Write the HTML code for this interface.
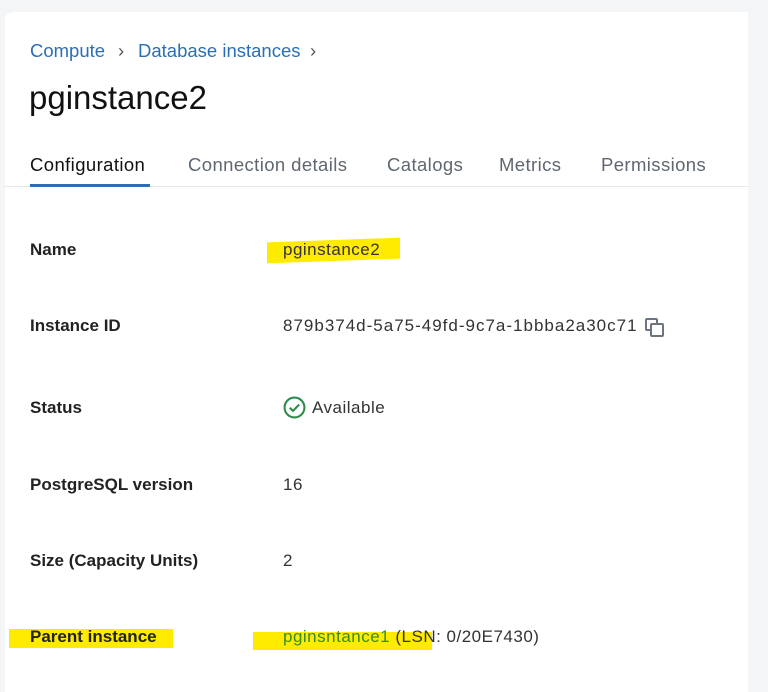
<!DOCTYPE html>
<html><head><style>
body{margin:0;width:768px;height:675px;background:#f4f5f7;font-family:"Liberation Sans",sans-serif;position:relative;overflow:hidden}
.card{position:absolute;left:5px;top:12px;width:743px;height:680px;background:#fff;border-radius:8px 0 0 0}
.a{position:absolute;white-space:nowrap}
.bc{font-size:18.5px;color:#2a6fb5;top:40px}
.tab{font-size:18.5px;letter-spacing:0.4px;color:#5f6770;top:154px}
.lab{left:30px;font-size:17px;font-weight:bold;color:#222}
.val{left:283px;font-size:17px;letter-spacing:0.5px;color:#333}
.hl{position:absolute;background:#ffeb00}
</style></head><body>
<div class="card"></div>
<div class="a bc" style="left:30px">Compute</div>
<div class="a bc" style="left:118px;color:#555">›</div>
<div class="a bc" style="left:138px">Database instances</div>
<div class="a bc" style="left:310px;color:#555">›</div>
<div class="a" style="left:29px;top:79px;font-size:33px;color:#111">pginstance2</div>
<div class="a tab" style="left:30px;color:#111">Configuration</div>
<div class="a tab" style="left:188px">Connection details</div>
<div class="a tab" style="left:387px">Catalogs</div>
<div class="a tab" style="left:499px">Metrics</div>
<div class="a tab" style="left:601px">Permissions</div>
<div style="position:absolute;left:5px;top:186px;width:743px;height:1px;background:#e8e8e8"></div>
<div style="position:absolute;left:30px;top:184px;width:120px;height:3px;background:#2a6fb5"></div>

<div class="hl" style="left:267px;top:240px;width:133px;height:21px;transform:skewY(-2deg)"></div>
<div class="a lab" style="top:240px">Name</div>
<div class="a val" style="top:240px">pginstance2</div>

<div class="a lab" style="top:316px">Instance ID</div>
<div class="a val" style="top:316px;letter-spacing:1px">879b374d-5a75-49fd-9c7a-1bbba2a30c71</div>
<svg style="position:absolute;left:644px;top:317px" width="22" height="22" viewBox="0 0 22 22"><rect x="2" y="2" width="11" height="11" rx="1" fill="none" stroke="#6b7580" stroke-width="2"/><rect x="7" y="7" width="12" height="12" rx="1" fill="#fff" stroke="#6b7580" stroke-width="2"/></svg>

<div class="a lab" style="top:398px">Status</div>
<svg style="position:absolute;left:283px;top:396px" width="23" height="23" viewBox="0 0 22 22"><circle cx="11" cy="11" r="9.5" fill="none" stroke="#2e8b4a" stroke-width="2"/><path d="M6.5 11.2l3 3 6-6" fill="none" stroke="#2e8b4a" stroke-width="2"/></svg>
<div class="a val" style="top:398px;left:312px">Available</div>

<div class="a lab" style="top:475px">PostgreSQL version</div>
<div class="a val" style="top:475px">16</div>

<div class="a lab" style="top:551px">Size (Capacity Units)</div>
<div class="a val" style="top:551px">2</div>

<div class="hl" style="left:9px;top:629px;width:164px;height:19px"></div>
<div class="hl" style="left:253px;top:632px;width:179px;height:18px"></div>
<div class="a lab" style="top:627px">Parent instance</div>
<div class="a val" style="top:627px"><span style="color:#3a8a2a">pginsntance1</span> (LSN: 0/20E7430)</div>
</body></html>
